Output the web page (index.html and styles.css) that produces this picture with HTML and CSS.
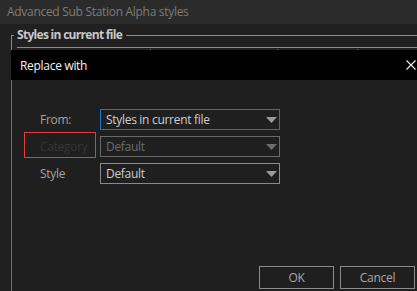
FILE: index.html
```html
<!DOCTYPE html>
<html lang="en">
<head>
    <meta charset="UTF-8">
    <title>Advanced Sub Station Alpha styles</title>
    <link rel="stylesheet" href="styles.css">
</head>
<body>

    <!-- 메인 창 -->
    <div class="window">
        <div class="titlebar">Advanced Sub Station Alpha styles</div>
        <div class="groupbox">
            <span class="legend">Styles in current file</span>
            <div class="listview">
                <i class="tick" style="left: 133px"></i>
                <i class="tick" style="left: 260px"></i>
                <i class="tick" style="left: 340px"></i>
            </div>
        </div>
    </div>

    <!-- 대화상자 -->
    <div class="dialog">
        <div class="dialog-title">
            <span>Replace with</span>
            <svg class="close" width="10" height="10" viewBox="0 0 10 10">
                <path d="M0.5 0.5 L9.5 9.5 M9.5 0.5 L0.5 9.5" stroke="#e8e8e8" stroke-width="1.2"/>
            </svg>
        </div>
        <div class="dialog-body">
            <div class="form">
                <div class="row">
                    <span class="label">From:</span>
                    <div class="select focused">
                        <span>Styles in current file</span>
                        <svg class="arrow" width="11" height="6" viewBox="0 0 11 6"><polygon points="0,0 11,0 5.5,6" fill="#9c9c9c"/></svg>
                    </div>
                </div>
                <div class="row">
                    <span class="label disabled">Category</span>
                    <div class="select disabled">
                        <span>Default</span>
                        <svg class="arrow" width="11" height="6" viewBox="0 0 11 6"><polygon points="0,0 11,0 5.5,6" fill="#6c6c6c"/></svg>
                    </div>
                </div>
                <div class="row">
                    <span class="label">Style</span>
                    <div class="select">
                        <span>Default</span>
                        <svg class="arrow" width="11" height="6" viewBox="0 0 11 6"><polygon points="0,0 11,0 5.5,6" fill="#9c9c9c"/></svg>
                    </div>
                </div>
            </div>
            <div class="buttons">
                <button>OK</button>
                <button>Cancel</button>
            </div>
            <div class="highlight"></div>
        </div>
    </div>

</body>
</html>
```

FILE: styles.css
```css
/* 기본 스타일링 */
body {
    margin: 0;
    padding: 0;
    width: 417px;
    height: 291px;
    overflow: hidden;
    position: relative;
    background-color: #202020;
    font-family: "Open Sans", "Noto Sans", sans-serif;
    font-size: 12px;
    letter-spacing: -0.3px;
}

.window {
    height: 100%;
    display: flex;
    flex-direction: column;
}

.titlebar {
    height: 24px;
    line-height: 24px;
    padding-left: 7px;
    background-color: #2b2b2b;
    color: #7c7c7c;
}

/* 그룹 박스 */
.groupbox {
    flex: 1;
    margin: 11px 0 0 11px;
    border-top: 1px solid #8a8a8a;
    border-left: 1px solid #8a8a8a;
    position: relative;
}

.legend {
    position: absolute;
    top: -9px;
    left: 2px;
    padding: 0 4px 0 3px;
    background-color: #202020;
    color: #c8c8c8;
    font-weight: bold;
    letter-spacing: -0.7px;
    line-height: 16px;
}

.listview {
    margin: 11px 0 0 5px;
    border-top: 1px solid #8a8a8a;
    position: relative;
}

.tick {
    position: absolute;
    top: 1px;
    width: 1px;
    height: 1px;
    background-color: #6a6a6a;
}

/* 대화상자 */
.dialog {
    position: absolute;
    left: 11px;
    top: 50px;
    right: 0;
    bottom: 0;
    display: flex;
    flex-direction: column;
}

.dialog-title {
    height: 30px;
    display: flex;
    align-items: center;
    justify-content: space-between;
    padding: 0 1px 0 9px;
    background-color: #000;
    color: #f4f4f4;
}

.dialog-body {
    flex: 1;
    position: relative;
    display: flex;
    flex-direction: column;
    justify-content: space-between;
    border-left: 1px solid #6e6e6e;
    background-color: #1f1f1f;
}

.form {
    display: flex;
    flex-direction: column;
    gap: 6px;
    padding: 29px 0 0 28px;
}

.row {
    display: flex;
    align-items: center;
}

.label {
    width: 60px;
    color: #a4a4a4;
}

.label.disabled {
    color: #363636;
}

.select {
    width: 171px;
    height: 19px;
    border: 1px solid #8a8a8a;
    display: flex;
    align-items: center;
    justify-content: space-between;
    padding: 0 2px 0 5px;
    color: #cfcfcf;
}

.select.focused {
    border-color: #1f74c4;
}

.select.disabled {
    border-color: #6a6a6a;
    color: #6c6c6c;
}

.buttons {
    display: flex;
    justify-content: flex-end;
    gap: 6px;
    padding: 0 2px 2px 0;
}

.buttons button {
    width: 75px;
    height: 23px;
    border: 1px solid #8a8a8a;
    background-color: #1f1f1f;
    color: #a8a8a8;
    font-family: inherit;
    font-size: 12px;
    letter-spacing: inherit;
    padding: 0;
}

/* 빨간 강조 박스 */
.highlight {
    position: absolute;
    left: 12px;
    top: 52px;
    width: 70px;
    height: 24px;
    border: 1px solid #e33b3b;
}
```
